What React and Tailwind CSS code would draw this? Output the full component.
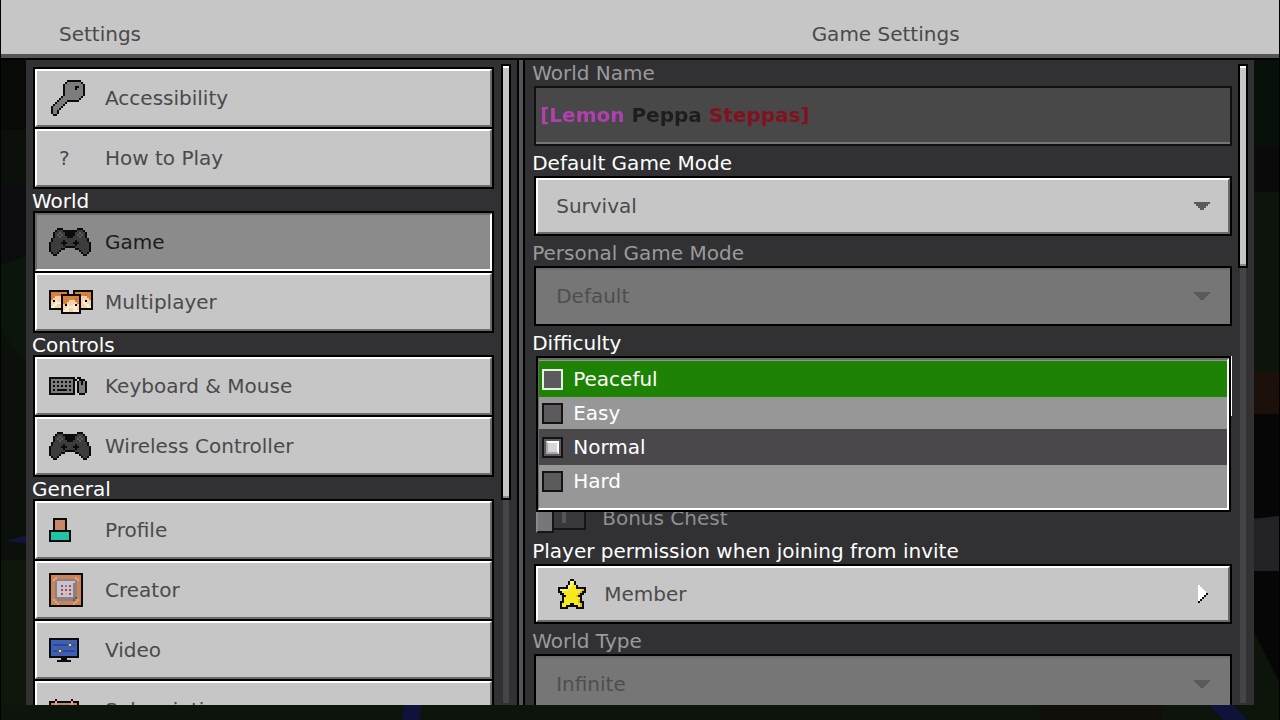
import React, { useState } from 'react';
import clsx from 'clsx';

const PALETTE = {
  B: '#0b0b0c',
  D: '#3c3c3e',
  G: '#7c7c7c',
  g: '#5a5a5c',
  O: '#d9803f',
  o: '#c46f30',
  S: '#f3d3ab',
  s: '#fdebd2',
  P: '#c8866b',
  T: '#1fc3a5',
  C: '#c98558',
  c: '#e3a583',
  d: '#8c7f86',
  W: '#c9c3cb',
  R: '#a2485a',
  V: '#3e5fb8',
  v: '#2f4890',
  w: '#d8d8c8',
  Y: '#f7e91e',
  y: '#fdf67e',
  A: '#d9bd14',
  F: '#ffffff',
};

const KEY = [
  '.........BBBBBBB..',
  '........BGGGGGGGB.',
  '.......BGGGGGGGGGB',
  '.......BGGGGGBBGGB',
  '.......BGGGGGBGGGB',
  '.......BGGGGGGGGGB',
  '.......BGGGGGGGGGB',
  '.......BGGGGGGGGGB',
  '......BGGGGGGGGGB.',
  '.....BGGGGGGGGGB..',
  '....BGGGGBBBBBB...',
  '...BGGGGB.........',
  '..BGGGGB..........',
  '.BGGGGB...........',
  '.BGGGB............',
  '.BGGB.............',
  '.BGGB.............',
  '..BB..............',
];

const GAMEPAD = [
  '....BBB.......BBB....',
  '...BDDDBBBBBBBDDDB...',
  '..BDDgDDBBBBBDDgDDB..',
  '..BDgDgDBBBBBDgDgDB..',
  '..BDDgDDDBBBDDDgDDB..',
  '.BDDDDDDDDDDDDDDDDDB.',
  '.BDDDDDBDDDDDBDDDDDB.',
  'BDDDDDBBBDDDBBBDDDDDB',
  'BDDDDDDBDDDDDBDDDDDDB',
  'BDDDDDDDBBBBBDDDDDDDB',
  'BDDDDDBB.....BBDDDDDB',
  'BDDDDB.........BDDDDB',
  '.BDDB...........BDDB.',
  '..BB.............BB..',
];

const PLAYERS = [
  'BBBBBBBBBB..BBBBBBBBBB',
  'BOOOOOOOOB..BOOOOOOOOB',
  'BOOOOOBBBBBBBBBBOOoOOB',
  'BOOSSSBOOOOOOOOBSSSOOB',
  'BOSSSSBOOOOOOoOBSSSSOB',
  'BSBsSSBOOOSSSOOBSsBSSB',
  'BSSsssBOOSSSSSOBSssSSB',
  'BSssSSBSBsSSsBSBSSssSB',
  'BssSSSBSSsssssSBSSSssB',
  'BBBBBBBSssSSssSBBBBBBB',
  '......BsssSSsssB......',
  '......BBBBBBBBBB......',
];

const KEYBOARD = [
  'BBBBBBBBBBBBB.BB...',
  'BGGGGGGGGGGGBB.BBB.',
  'BGBGBGBGBGBGB.BGBGB',
  'BGGGGGGGGGGGB.BGBGB',
  'BGBGBGBGBGBGB.BGGGB',
  'BGGGGGGGGGGGB.BGGGB',
  'BGBGBBBBBGBGB.BGGGB',
  'BGGGGGGGGGGGB.BGGGB',
  'BBBBBBBBBBBBB..BBB.',
];

const PROFILE = [
  '..BBBBBBB..',
  '..BPPPPPB..',
  '..BPPPPPB..',
  '..BPPPPPB..',
  '..BPPPPPB..',
  '..BPPPPPB..',
  'BBBBBBBBBBB',
  'BTTTTTTTTTB',
  'BTTTTTTTTTB',
  'BTTTTTTTTTB',
  'BTTTTTTTTTB',
  'BBBBBBBBBBB',
];

const COMMAND_BLOCK = [
  'BBBBBBBBBBBBBBBBB',
  'BCCCCCCCCCCCCCCCB',
  'BCCcCCCCCCCCCcCCB',
  'BCcCdddddddddCcCB',
  'BCCdWWWWWWWWWdCCB',
  'BCCdWWWWWWWWddCCB',
  'BCCdWWRWdWRWddCCB',
  'BCCdWWWWWWWWddCCB',
  'BCCdWWRWRWRWddCCB',
  'BCCdWWWWWWWWddCCB',
  'BCCdWWRWcWRWddCCB',
  'BCCdWWWWWWWWddCCB',
  'BCCddddddddddgCCB',
  'BCcCddddddddgCcCB',
  'BCCcCCCCCCCCCcCCB',
  'BCCCcCCCCCCCcCCCB',
  'BBBBBBBBBBBBBBBBB',
];

const MONITOR = [
  'BBBBBBBBBBBBBBB',
  'BVVVVVVVVVVVVVB',
  'BVVVVVVVVVgVVVB',
  'BVvvvvvvvgwgvVB',
  'BVVVVVVVVVgVVVB',
  'BVVVVgVVVVVVVVB',
  'BVvvgwgvvvvvvVB',
  'BVVVVgVVVVVVVVB',
  'BVVVVVVVVVVVVVB',
  'BBBBBBBBBBBBBBB',
  '......BBB......',
  '....BBBBBBB....',
];

const CALENDAR = [
  '...B.......B...',
  'BBBcBBBBBBBcBBB',
  'BPPcPPPPPPPcPPB',
  'BPPPPPPPPPPPPPB',
  'BBBBBBBBBBBBBBB',
  'BWWWWWWWWWWWWWB',
  'BWdWdWdWdWdWdWB',
  'BWWWWWWWWWWWWWB',
  'BWdWdWdWdWdWdWB',
  'BWWWWWWWWWWWWWB',
  'BBBBBBBBBBBBBBB',
];

const STAR = [
  '......BB......',
  '.....ByyB.....',
  '.....ByYB.....',
  '....ByyYYB....',
  'BBBBByYYYBBBBB',
  'ByyyyYYYYYYYAB',
  'BBYYYYYYYYYABB',
  '.BBYYYYYYYABB.',
  '..BBYYYYYABB..',
  '..BYYYYYYYYB..',
  '..BYYYYYYYAB..',
  '.BBYYYYYYYABB.',
  '.BYYYYBBYYYAB.',
  '.BYYBBBBBBYAB.',
  '.BBBB....BBBB.',
];

const ARROW_DOWN = ['gggggggg', '.gggggg.', '..gggg..', '...gg...'];

const CHEVRON = ['F....', 'FF...', 'FFF..', 'FFFF.', 'FFFFB', 'FFFB.', 'FFB..', 'FB...', 'B....'];

// Draws a sprite from rows of palette letters, two screen pixels per cell
const Sprite = ({ rows, className }) => (
  <svg
    width={rows[0].length * 2}
    height={rows.length * 2}
    viewBox={`0 0 ${rows[0].length} ${rows.length}`}
    shapeRendering="crispEdges"
    aria-hidden="true"
    className={clsx('shrink-0', className)}
  >
    {rows.flatMap((row, y) =>
      row.split('').map((cell, x) =>
        cell === '.' ? null : <rect key={`${x}-${y}`} x={x} y={y} width="1" height="1" fill={PALETTE[cell]} />
      )
    )}
  </svg>
);

const NAV_GROUPS = [
  {
    title: null,
    items: [
      { id: 'accessibility', label: 'Accessibility', sprite: KEY },
      { id: 'how-to-play', label: 'How to Play', sprite: null },
    ],
  },
  {
    title: 'World',
    items: [
      { id: 'game', label: 'Game', sprite: GAMEPAD },
      { id: 'multiplayer', label: 'Multiplayer', sprite: PLAYERS },
    ],
  },
  {
    title: 'Controls',
    items: [
      { id: 'keyboard', label: 'Keyboard & Mouse', sprite: KEYBOARD },
      { id: 'controller', label: 'Wireless Controller', sprite: GAMEPAD },
    ],
  },
  {
    title: 'General',
    items: [
      { id: 'profile', label: 'Profile', sprite: PROFILE },
      { id: 'creator', label: 'Creator', sprite: COMMAND_BLOCK },
      { id: 'video', label: 'Video', sprite: MONITOR },
      { id: 'subscriptions', label: 'Subscriptions', sprite: CALENDAR },
    ],
  },
];

const DIFFICULTIES = ['Peaceful', 'Easy', 'Normal', 'Hard'];

const RAISED = 'border-2 border-t-white border-l-white border-r-[#6a6a6a] border-b-[#6a6a6a] bg-[#c6c6c6]';

const NavButton = ({ item, active, onSelect }) => (
  <button
    type="button"
    onClick={() => onSelect(item.id)}
    className="block h-[60px] w-full border border-black bg-black text-left"
  >
    <span
      className={clsx(
        'flex h-full items-center pl-3',
        active
          ? 'border-2 border-t-[#6a6a6a] border-l-[#6a6a6a] border-r-white border-b-white bg-[#8b8b8b] text-[#1c1c1c]'
          : clsx(RAISED, 'text-[#4a4a4a]')
      )}
    >
      <span className="flex w-14 shrink-0 items-center">
        {item.sprite ? <Sprite rows={item.sprite} /> : <span className="pl-2.5">?</span>}
      </span>
      {item.label}
    </span>
  </button>
);

const Scrollbar = ({ thumbClass }) => (
  <div className="flex w-2.5 shrink-0 flex-col items-center pt-1 pb-0.5" aria-hidden="true">
    <div className={clsx('w-full shrink-0 border-2 border-black bg-black', thumbClass)}>
      <div className="h-full border-t-2 border-b-2 border-t-white border-b-[#8b8b8b] bg-[#c6c6c6]" />
    </div>
    <div className="w-1.5 flex-1 bg-[#454547]" />
  </div>
);

const FieldLabel = ({ htmlFor, muted, children }) => (
  <label
    htmlFor={htmlFor}
    className={clsx('-ml-0.5 flex h-[26px] items-center', muted ? 'text-[#9a9a9c]' : 'text-white')}
  >
    {children}
  </label>
);

const SelectField = ({ id, label, value, disabled }) => (
  <div className="mb-1">
    <FieldLabel htmlFor={id} muted={disabled}>{label}</FieldLabel>
    <div className="relative h-[60px] border-2 border-black">
      <select
        id={id}
        defaultValue={value}
        disabled={disabled}
        className={clsx(
          'h-full w-full appearance-none rounded-none opacity-100 outline-none',
          disabled
            ? 'border-y-2 border-t-[#6a6a6a] border-b-[#767676] bg-[#767676] pl-5 text-[#4e4e4e]'
            : clsx(RAISED, 'pl-[18px] text-[#4a4a4a]')
        )}
      >
        <option>{value}</option>
      </select>
      <Sprite rows={ARROW_DOWN} className="pointer-events-none absolute top-6 right-5" />
    </div>
  </div>
);

const DifficultyField = () => {
  const [difficulty, setDifficulty] = useState('Normal');
  const [highlighted, setHighlighted] = useState('Peaceful');

  return (
    <div className="relative mb-1">
      <FieldLabel htmlFor="difficulty-toggle">Difficulty</FieldLabel>
      <button
        id="difficulty-toggle"
        type="button"
        aria-expanded="true"
        className="block h-[60px] w-full border-r border-white"
      />
      <div
        role="radiogroup"
        aria-label="Difficulty"
        className="absolute top-[26px] right-px left-0.5 z-10 border-2 border-black bg-[#979797]"
      >
        <div className="border-2 border-l border-t-[#6a6a6a] border-l-[#6a6a6a] border-r-white border-b-white pt-0.5 pb-2.5">
          {DIFFICULTIES.map((name) => (
            <label
              key={name}
              onMouseEnter={() => setHighlighted(name)}
              className={clsx(
                'flex h-[34px] items-center gap-2.5 pl-[3px] text-white',
                name === highlighted && 'bg-[#1e8305] shadow-[0_1px_0_#1e8305,0_-1px_0_#1e8305]',
                name === difficulty && name !== highlighted && 'bg-[#4a484b] shadow-[0_1px_0_#4a484b,0_-1px_0_#4a484b]'
              )}
            >
              <span className="grid h-[21px] w-[21px] place-items-center">
                <input
                  type="radio"
                  name="difficulty"
                  value={name}
                  checked={name === difficulty}
                  onChange={() => setDifficulty(name)}
                  className={clsx(
                    'col-start-1 row-start-1 h-[21px] w-[21px] appearance-none border-2 bg-[#5c5a5d] outline-none',
                    name === highlighted ? 'border-[#e4f3df]' : 'border-[#141414]'
                  )}
                />
                {name === difficulty && (
                  <span className="pointer-events-none col-start-1 row-start-1 h-[13px] w-[13px] border-2 border-t-white border-r-white border-b-[#a8a8a8] border-l-[#a8a8a8] bg-[#d6d6d6]" />
                )}
              </span>
              {name}
            </label>
          ))}
        </div>
      </div>
    </div>
  );
};

const Backdrop = () => (
  <svg
    className="absolute inset-0 -z-10 h-full w-full"
    viewBox="0 0 1280 720"
    preserveAspectRatio="none"
    aria-hidden="true"
  >
    <rect width="1280" height="720" fill="#0b110a" />
    <rect width="26" height="75" y="55" fill="#070a07" />
    <path d="M0 185h26v80H0z" fill="#0c0c0f" />
    <path d="M0 265l26-10v110L0 330z" fill="#0c150b" />
    <path d="M5 541l21-6v8z" fill="#10143f" />
    <path d="M0 560h26v145H0z" fill="#0f170c" />
    <path d="M0 705h1280v15H0z" fill="#0d140b" />
    <path d="M404 705h17l-2 15h-17z" fill="#0f1339" />
    <path d="M1040 705h122v15h-122z" fill="#120f0a" />
    <path d="M1254 60h26v85h-26z" fill="#071009" />
    <path d="M1254 145h26v47h-26z" fill="#0b0a0a" />
    <path d="M1254 192h26v180h-26z" fill="#0d140c" />
    <path d="M1254 372h26v42h-26z" fill="#1b100a" />
    <path d="M1254 414h26v104h-26z" fill="#060607" />
    <path d="M1254 519l26-3v55h-26z" fill="#222226" />
    <path d="M1254 571h26v110l-26-50z" fill="#060607" />
    <path d="M1254 631l26 50v39h-26z" fill="#0d150b" />
    <path d="M1210 705h24l14 15h-24z" fill="#0f1339" />
  </svg>
);

const SettingsNav = () => {
  const [active, setActive] = useState('game');

  return (
    <div className="flex min-h-0 overflow-hidden px-1.5">
      <nav aria-label="Settings" className="min-w-0 flex-1 overflow-hidden pt-2 pr-2">
        {NAV_GROUPS.map((group) => (
          <section key={group.title ?? 'top'}>
            {group.title && (
              <h2 className="flex h-6 items-center pt-0.5 text-white">{group.title}</h2>
            )}
            <div className="ml-0.5 shadow-[0_0_0_1px_#000]">
              {group.items.map((item) => (
                <NavButton key={item.id} item={item} active={item.id === active} onSelect={setActive} />
              ))}
            </div>
          </section>
        ))}
      </nav>
      <Scrollbar thumbClass="h-[436px]" />
    </div>
  );
};

const GameSettings = () => {
  const [bonusChest, setBonusChest] = useState(false);

  return (
    <div className="flex min-h-0 overflow-hidden pr-1.5">
      <div className="w-2 shrink-0 border-x-2 border-black bg-[#555557]" />
      <div className="min-w-0 flex-1 overflow-hidden pr-1.5 pl-[9px]">
        <div className="mb-1">
          <FieldLabel htmlFor="world-name" muted>World Name</FieldLabel>
          <div className="h-[60px] border-2 border-[#101010]">
            <div className="h-full border-b-2 border-[#767676] bg-[#484848]">
              <input
                id="world-name"
                type="text"
                readOnly
                value="[Lemon Peppa Steppas]"
                className="h-full w-full bg-[linear-gradient(90deg,#b23fb0_91px,#1d1d1d_91px,#1d1d1d_169px,#83101f_169px)] bg-clip-text pl-1 font-bold text-transparent outline-none"
              />
            </div>
          </div>
        </div>
        <SelectField id="default-mode" label="Default Game Mode" value="Survival" />
        <SelectField id="personal-mode" label="Personal Game Mode" value="Default" disabled />
        <DifficultyField />
        <label className="mb-1 flex h-[114px] items-end text-[#8f8f91]">
          <input
            type="checkbox"
            checked={bonusChest}
            onChange={() => setBonusChest(!bonusChest)}
            className="peer sr-only"
          />
          <span className="ml-0.5 flex h-8 w-[66px] items-start">
            <span className="h-[31px] w-[18px] border-2 border-[#151515] border-l-[#8a8a8a] bg-[#777779]" />
            <span className="flex h-7 w-8 items-center border-r-2 border-b-2 border-[#151515] bg-[#39393b] pl-2">
              <span className="h-4 w-1 bg-[#555557]" />
            </span>
          </span>
          <span className="flex h-8 items-center">Bonus Chest</span>
        </label>
        <div className="mb-1">
          <FieldLabel htmlFor="permission">Player permission when joining from invite</FieldLabel>
          <button id="permission" type="button" className="block h-[60px] w-full border-2 border-black text-left text-[#4a4a4a]">
            <span className={clsx('flex h-full items-center px-5', RAISED)}>
              <Sprite rows={STAR} />
              <span className="flex-1 pl-[18px]">Member</span>
              <Sprite rows={CHEVRON} />
            </span>
          </button>
        </div>
        <SelectField id="world-type" label="World Type" value="Infinite" disabled />
      </div>
      <Scrollbar thumbClass="h-[204px]" />
    </div>
  );
};

export default function App() {
  return (
    <div className="relative isolate flex h-screen flex-col overflow-hidden border-x border-black font-['DejaVu_Sans',sans-serif] text-[20px] leading-6">
      <Backdrop />
      <header className="grid shrink-0 grid-cols-[2fr_3fr] border-b-2 border-black bg-[#c6c6c6] text-[#4a4a4a]">
        <h1 className="pt-[22px] pb-2 pl-[58px]">Settings</h1>
        <h2 className="pt-[22px] pr-5 pb-2 text-center">Game Settings</h2>
        <div className="col-span-2 h-1 bg-[#555557]" />
      </header>
      <main className="mx-[25px] mb-[15px] grid min-h-0 flex-1 grid-cols-[2fr_3fr] grid-rows-[minmax(0,1fr)] bg-[#313133]">
        <SettingsNav />
        <GameSettings />
      </main>
    </div>
  );
}
